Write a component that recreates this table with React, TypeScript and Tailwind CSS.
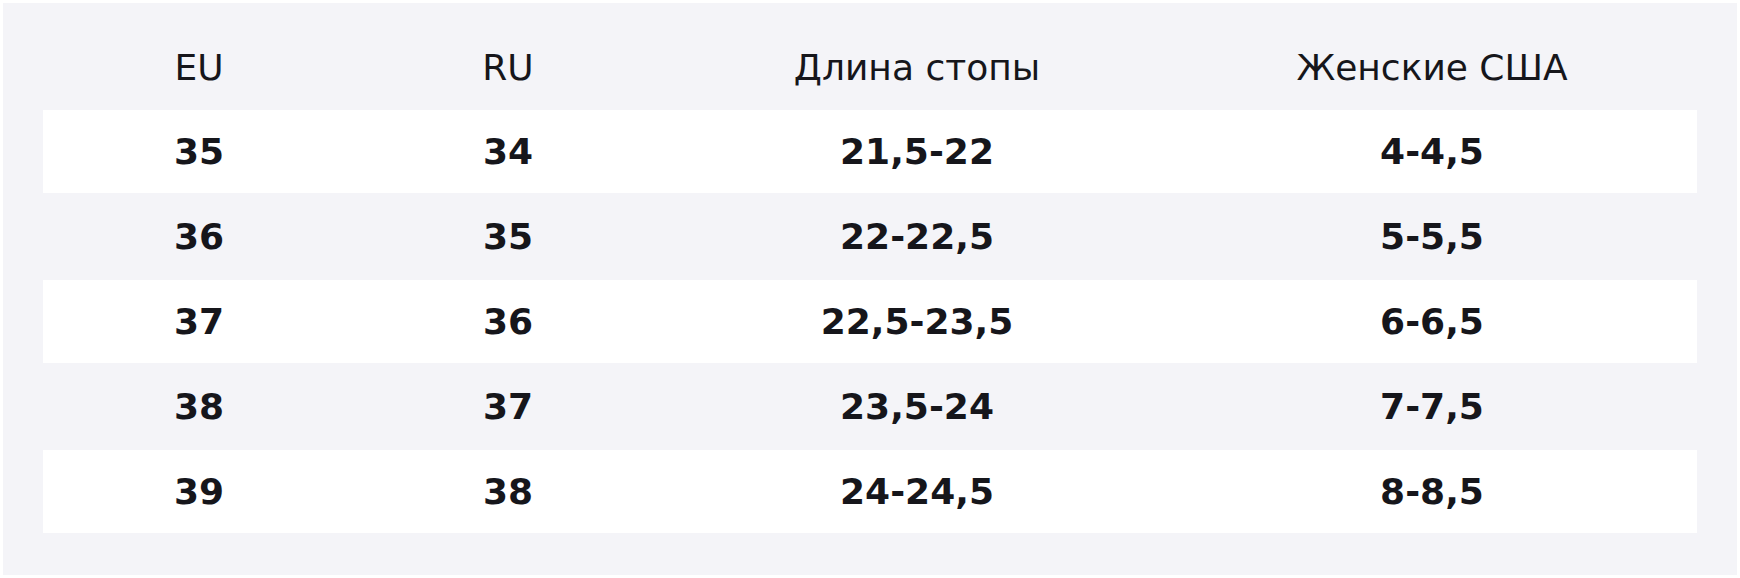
const headers = ["EU", "RU", "Длина стопы", "Женские США"];

const rows = [
  ["35", "34", "21,5-22", "4-4,5"],
  ["36", "35", "22-22,5", "5-5,5"],
  ["37", "36", "22,5-23,5", "6-6,5"],
  ["38", "37", "23,5-24", "7-7,5"],
  ["39", "38", "24-24,5", "8-8,5"],
];

const cols = "grid grid-cols-[312px_306px_512px_518px] items-center text-center";

export default function App() {
  return (
    <div className="h-[578px] w-[1740px] bg-white p-[3px] font-['DejaVu_Sans',sans-serif] text-[#16161b]">
      <div className="flex h-[572px] flex-col bg-[#f4f4f8] px-10 pt-[22px] pb-[42px]">
        <div className={`${cols} h-[85px] text-[36px] leading-none`}>
          {headers.map((h) => (
            <div key={h}>{h}</div>
          ))}
        </div>
        {rows.map((r, i) => (
          <div
            key={r[0]}
            className={`${cols} text-[36px] leading-none font-bold ${
              i % 2 === 0 ? "h-[83px] bg-white" : "h-[87px]"
            }`}
          >
            {r.map((c, j) => (
              <div key={j}>{c}</div>
            ))}
          </div>
        ))}
      </div>
    </div>
  );
}
